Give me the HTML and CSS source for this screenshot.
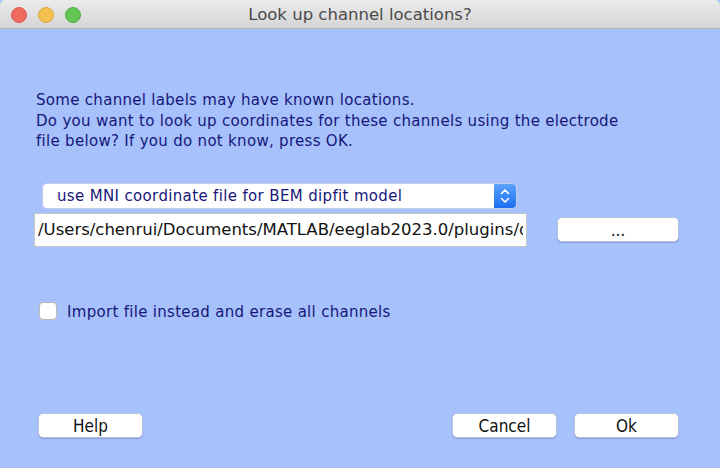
FILE: index.html
```html
<!DOCTYPE html>
<html lang="en">
<head>
  <meta charset="UTF-8" />
  <title>Look up channel locations?</title>
  <link rel="stylesheet" href="styles.css">
</head>
<body>
  <div class="window">
    <!-- Title bar -->
    <div class="titlebar">
      <div class="lights">
        <span class="light red"></span>
        <span class="light yellow"></span>
        <span class="light green"></span>
      </div>
      <div class="title">Look up channel locations?</div>
    </div>

    <div class="content">
      <p class="message">
        Some channel labels may have known locations.<br>
        Do you want to look up coordinates for these channels using the electrode<br>
        file below? If you do not know, press OK.
      </p>

      <div class="popup">
        <span class="popup-label">use MNI coordinate file for BEM dipfit model</span>
        <span class="stepper">
          <svg width="12" height="18" viewBox="0 0 12 18">
            <path d="M2.5 6.5 L6 3 L9.5 6.5" fill="none" stroke="#fff" stroke-width="1.6" stroke-linecap="round" stroke-linejoin="round"/>
            <path d="M2.5 11.5 L6 15 L9.5 11.5" fill="none" stroke="#fff" stroke-width="1.6" stroke-linecap="round" stroke-linejoin="round"/>
          </svg>
        </span>
      </div>

      <div class="path-row">
        <input type="text" class="path-field" readonly
          value="/Users/chenrui/Documents/MATLAB/eeglab2023.0/plugins/dipfit/standard_BEM/elec/standard_1005.elc">
        <button class="btn browse">...</button>
      </div>

      <label class="check-row">
        <span class="checkbox"></span>
        <span class="check-label">Import file instead and erase all channels</span>
      </label>

      <div class="buttons">
        <button class="btn">Help</button>
        <div class="right-buttons">
          <button class="btn">Cancel</button>
          <button class="btn">Ok</button>
        </div>
      </div>
    </div>
  </div>
</body>
</html>
```

FILE: styles.css
```css
body {
  margin: 0;
  background-color: #ffffff;
  font-family: "DejaVu Sans", Verdana, sans-serif;
}
.window {
  width: 720px;
  height: 468px;
  background-color: #a6c1fc;
  display: flex;
  flex-direction: column;
  overflow: hidden;
}
.titlebar {
  height: 28px;
  flex-shrink: 0;
  position: relative;
  display: flex;
  align-items: center;
  justify-content: center;
  background: linear-gradient(#ebebeb, #d5d5d5);
  border-bottom: 1px solid #b4b4b4;
  border-radius: 5px 5px 0 0;
}
.lights {
  position: absolute;
  left: 11px;
  top: 7px;
  display: flex;
  gap: 11px;
}
.light {
  width: 16px;
  height: 16px;
  border-radius: 50%;
  box-sizing: border-box;
}
.red {
  background-color: #ee6a5f;
  border: 1px solid #d85a50;
}
.yellow {
  background-color: #f5c14f;
  border: 1px solid #dba83f;
}
.green {
  background-color: #62c554;
  border: 1px solid #52ab45;
}
.title {
  font-size: 16.5px;
  color: #4a4a4a;
}
.content {
  flex: 1;
  padding: 0 41px 0 34px;
  display: flex;
  flex-direction: column;
}
.message {
  margin: 61px 0 0 2px;
  font-size: 15px;
  letter-spacing: 0.3px;
  line-height: 20.5px;
  color: #17177a;
}
.popup {
  margin: 31px 0 0 8px;
  width: 475px;
  height: 26px;
  box-sizing: border-box;
  display: flex;
  align-items: center;
  background-color: #ffffff;
  border: 1px solid #c3cde6;
  border-radius: 5px;
  overflow: hidden;
}
.popup-label {
  flex: 1;
  padding-left: 14px;
  padding-top: 1px;
  font-size: 15px;
  letter-spacing: 0.35px;
  color: #17177a;
  white-space: nowrap;
}
.stepper {
  width: 22px;
  height: 100%;
  display: flex;
  align-items: center;
  justify-content: center;
  background: linear-gradient(#5aa2fb, #1d6ff2);
}
.path-row {
  margin-top: 4px;
  display: flex;
  align-items: center;
}
.path-field {
  width: 493px;
  height: 34px;
  box-sizing: border-box;
  margin: 0;
  padding: 0 3px;
  background-color: #ffffff;
  border: 1px solid #c6c6c6;
  border-radius: 0;
  outline: none;
  font-family: "DejaVu Sans", Verdana, sans-serif;
  font-size: 16.5px;
  color: #111111;
}
.btn {
  height: 25px;
  width: 105px;
  padding: 1px 0 0;
  margin: 0;
  background-color: #ffffff;
  border: 1px solid #b7c2dc;
  border-radius: 5px;
  box-shadow: 0 1px 1px rgba(40, 60, 120, 0.25);
  font-family: "DejaVu Sans Condensed", "DejaVu Sans", sans-serif;
  font-size: 17px;
  color: #111111;
  cursor: pointer;
}
.browse {
  width: 122px;
  margin-left: 30px;
}
.check-row {
  margin: 55px 0 0 5px;
  display: flex;
  align-items: center;
  gap: 10px;
}
.checkbox {
  width: 18px;
  height: 18px;
  box-sizing: border-box;
  background-color: #ffffff;
  border: 1px solid #b9b9b9;
  border-radius: 4px;
}
.check-label {
  font-size: 15px;
  letter-spacing: 0.3px;
  color: #17177a;
  padding-top: 1px;
}
.buttons {
  margin: 92px 0 0 4px;
  display: flex;
  justify-content: space-between;
}
.right-buttons {
  display: flex;
  gap: 17px;
}
```
